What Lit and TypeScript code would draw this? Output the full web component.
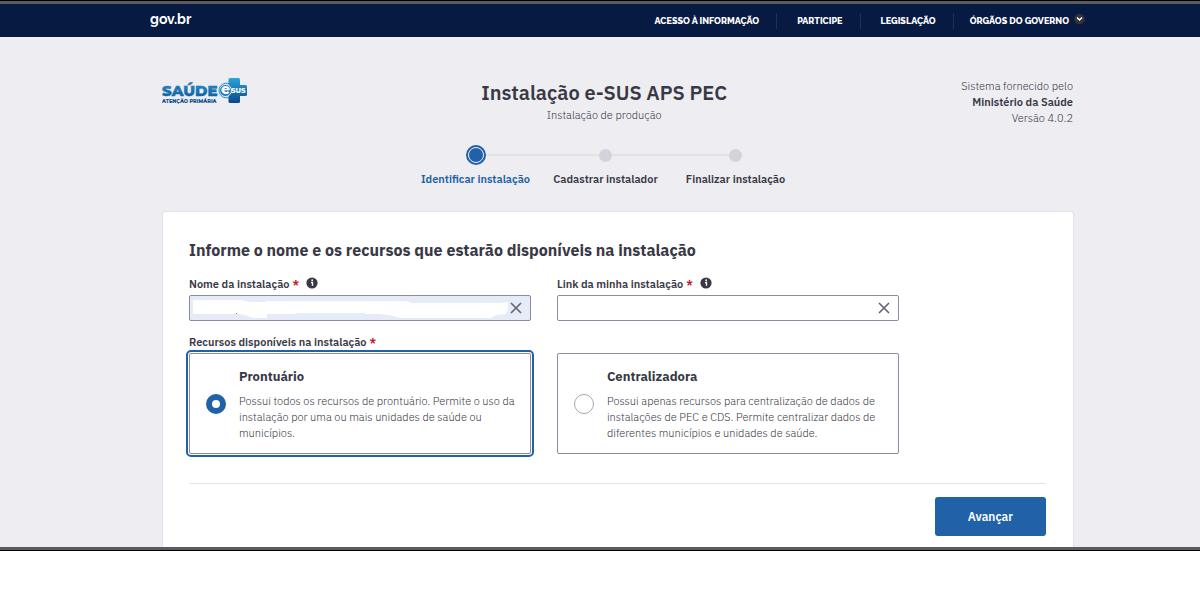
import { LitElement, html, css, nothing } from "lit";
import { customElement, property, state } from "lit/decorators.js";

const sans = css`"IBM Plex Sans", "Noto Sans", "Open Sans", sans-serif`;

@customElement("gov-bar")
class GovBar extends LitElement {
  static styles = css`
    :host {
      display: block;
      background: #071a41;
      color: #fff;
      font-family: Raleway, "Open Sans", sans-serif;
    }
    .bar {
      display: flex;
      justify-content: space-between;
      align-items: center;
      height: 33px;
      padding: 0 115px 0 150px;
    }
    .brand {
      color: inherit;
      text-decoration: none;
      display: block;
    }
    .brand svg {
      display: block;
    }
    .brand text {
      font-family: Raleway, Lato, sans-serif;
      font-weight: 700;
      font-size: 14px;
      fill: #fff;
    }
    .links {
      display: flex;
      align-items: center;
    }
    .link {
      color: inherit;
      text-decoration: none;
      font-size: 9px;
      line-height: 16px;
      font-weight: 800;
      padding: 0 17px 0 20px;
      border-left: 1px solid #1d3056;
      white-space: nowrap;
    }
    .link:first-child {
      border-left: 0;
    }
    .link:last-child {
      display: flex;
      gap: 5px;
      padding-right: 0;
      padding-left: 16px;
    }
    .link svg {
      display: block;
    }
  `;

  render() {
    return html`
      <nav class="bar">
        <a class="brand" href="#" aria-label="gov.br">
          <svg width="48" height="20" viewBox="0 0 48 20"><text x="0" y="13">gov.br</text></svg>
        </a>
        <div class="links">
          <a class="link" href="#">ACESSO À INFORMAÇÃO</a>
          <a class="link" href="#">PARTICIPE</a>
          <a class="link" href="#">LEGISLAÇÃO</a>
          <a class="link" href="#">
            ÓRGÃOS DO GOVERNO
            <svg width="11" height="12" viewBox="0 0 11 12">
              <circle cx="5.5" cy="6" r="5.300" fill="#333" />
              <path d="M3 4.500 5.500 7 8 4.500" fill="none" stroke="#fff" stroke-width="1.500" />
            </svg>
          </a>
        </div>
      </nav>
    `;
  }
}

@customElement("esus-logo")
class EsusLogo extends LitElement {
  static styles = css`
    :host {
      display: block;
    }
    svg {
      display: block;
    }
    text {
      font-family: Montserrat, "Open Sans", sans-serif;
      font-weight: 800;
    }
    .big {
      font-size: 15px;
      stroke: #176fb0;
      stroke-width: 0.5px;
    }
    .small {
      font-size: 5px;
    }
    .e {
      font-size: 14px;
    }
    .sus {
      font-size: 7px;
    }
  `;

  render() {
    return html`
      <svg width="85" height="26" viewBox="0 0 85 26" role="img" aria-label="Saúde Atenção Primária e-SUS">
        <defs>
          <linearGradient id="g" gradientUnits="userSpaceOnUse" x1="0" y1="0" x2="0" y2="26">
            <stop offset="0" stop-color="#2ba3da" />
            <stop offset="0.55" stop-color="#176fb0" />
            <stop offset="1" stop-color="#0b4480" />
          </linearGradient>
        </defs>
        <text fill="url(#g)">
          <tspan class="big" x="0" y="18">SAÚDE</tspan>
          <tspan class="small" x="0" y="25">ATENÇÃO PRIMÁRIA</tspan>
        </text>
        <path d="M68 0h8.500q1.500 0 1.500 1.500V7h5.500q1.500 0 1.500 1.500v8q0 1.500-1.500 1.500H78v5.500q0 1.500-1.500 1.500H68q-1.500 0-1.500-1.500V1.500Q66.500 0 68 0z" fill="url(#g)" />
        <circle cx="63.500" cy="12.500" r="6" fill="#1b7dbd" stroke="#eeedf2" stroke-width="1" />
        <path d="M67 19.300A7.300 7.300 0 1 1 67 5.700" fill="none" stroke="#2486c4" stroke-width="1" />
        <text class="e" x="59" y="16" fill="#fff">e</text>
        <text class="sus" x="69" y="15" fill="#fff">SUS</text>
      </svg>
    `;
  }
}

@customElement("step-list")
class StepList extends LitElement {
  @property({ type: Array }) steps: string[] = [];
  @property({ type: Number }) current = 0;

  static styles = css`
    :host {
      display: block;
      font-family: ${sans};
    }
    .steps {
      display: flex;
      justify-content: center;
      list-style: none;
      margin: 0;
      padding: 0;
    }
    .step {
      display: grid;
      justify-items: center;
      row-gap: 6px;
      width: 130px;
      font-size: 11px;
      line-height: 16px;
      font-weight: 600;
      color: #393946;
      white-space: nowrap;
    }
    .rail {
      display: grid;
      grid-template-columns: 1fr auto 1fr;
      align-items: center;
      width: 100%;
      height: 20px;
    }
    .line {
      height: 2px;
      background: #e1e1e6;
    }
    .step:first-child .line:first-child,
    .step:last-child .line:last-child {
      background: none;
    }
    .dot {
      width: 13px;
      height: 13px;
      border-radius: 50%;
      background: #d3d3db;
    }
    .current {
      color: #2161a7;
    }
    .current .dot {
      width: 14px;
      height: 14px;
      background: #2161a7;
      border: 1px solid #eeedf2;
      box-shadow: 0 0 0 2px #2161a7;
      margin: 0 2px;
    }
  `;

  render() {
    return html`
      <ol class="steps">
        ${this.steps.map(
          (s, i) => html`
            <li class="step ${i === this.current ? "current" : ""}">
              <span class="rail"><span class="line"></span><span class="dot"></span><span class="line"></span></span>
              <span>${s}</span>
            </li>
          `
        )}
      </ol>
    `;
  }
}

@customElement("text-field")
class TextField extends LitElement {
  @property() label = "";
  @property({ type: Boolean }) masked = false;

  static styles = css`
    :host {
      display: block;
      font-family: ${sans};
    }
    .top {
      display: flex;
      align-items: center;
      font-size: 11px;
      line-height: 16px;
      font-weight: 600;
      color: #393946;
      margin-bottom: 3px;
    }
    .req {
      color: #c01c2b;
      font-weight: 700;
      margin: 0 7px 0 3px;
    }
    .box {
      display: flex;
      align-items: center;
      position: relative;
      box-sizing: border-box;
      height: 26px;
      border: 1px solid #8d8c9e;
      border-radius: 2px;
      background: #fff;
    }
    .filled {
      background: #e5ebf7;
    }
    .input {
      flex: 1;
      min-width: 0;
      border: 0;
      outline: 0;
      background: none;
      padding: 0 8px;
      font: inherit;
      font-size: 11px;
    }
    .clear {
      border: 0;
      background: none;
      padding: 0;
      margin-right: 8px;
      display: block;
    }
    svg {
      display: block;
    }
    .mask {
      position: absolute;
      left: 3px;
      top: 3px;
    }
  `;

  render() {
    return html`
      <div class="top">
        <label for="field">${this.label}</label><span class="req">*</span>
        <svg width="12" height="14" viewBox="0 0 12 14">
          <circle cx="6" cy="6" r="5.600" fill="#393946" />
          <path d="M5 5.500h1.500v3.200" fill="none" stroke="#fff" stroke-width="1.300" />
          <circle cx="6.200" cy="3.200" r="0.900" fill="#fff" />
        </svg>
      </div>
      <div class="box ${this.masked ? "filled" : ""}">
        <input class="input" id="field" type="text" />
        ${this.masked
          ? html`<svg class="mask" width="316" height="20" viewBox="0 0 316 20">
              <path
                d="M0 1H49L58 3H72L74 2H214L219 4H307L315 3V9L313 15L303 16L298 19H207L196 16L185 15H172V14H103V15H74V19H60L52 16L46 15H0Z"
                fill="#fff"
              />
              <rect x="43" y="14" width="1" height="1" fill="#777" />
            </svg>`
          : nothing}
        <button class="clear" type="button" aria-label="Limpar">
          <svg width="12" height="12" viewBox="0 0 12 12">
            <path d="M1 1 11 11M11 1 1 11" fill="none" stroke="#636272" stroke-width="1.600" />
          </svg>
        </button>
      </div>
    `;
  }
}

@customElement("app-root")
class AppRoot extends LitElement {
  @state() private choice = "Prontuário";

  private options = [
    {
      name: "Prontuário",
      text: "Possui todos os recursos de prontuário. Permite o uso da instalação por uma ou mais unidades de saúde ou municípios.",
    },
    {
      name: "Centralizadora",
      text: "Possui apenas recursos para centralização de dados de instalações de PEC e CDS. Permite centralizar dados de diferentes municípios e unidades de saúde.",
    },
  ];

  static styles = css`
    :host {
      display: block;
      background: #fff;
      color: #393946;
      font-family: ${sans};
      font-size: 11px;
      line-height: 16px;
    }
    .window {
      background: #eeedf2;
      border-top: 1px solid #000;
      border-bottom: 1px solid #000;
    }
    .edge {
      height: 3px;
      background: #5c5a61;
    }
    .page {
      padding: 41px 126px 0 162px;
    }
    .header {
      display: flex;
      justify-content: space-between;
      align-items: flex-start;
      padding-right: 1px;
    }
    .titles {
      text-align: center;
    }
    .title {
      margin: 0;
      font-size: 20px;
      line-height: 29px;
      font-weight: 600;
    }
    .sub,
    .provider {
      color: #393946;
      font-weight: 300;
    }
    .provider {
      text-align: right;
    }
    .provider strong {
      display: block;
      font-weight: 600;
    }
    .steps {
      margin: 19px 25px 24px 0;
    }
    .card {
      background: #fff;
      border: 1px solid #e1e1e7;
      border-bottom: 0;
      border-radius: 4px 4px 0 0;
      padding: 27px 27px 11px 26px;
    }
    .heading {
      margin: 0 0 15px;
      font-size: 16px;
      line-height: 22px;
      font-weight: 700;
    }
    .grid {
      display: grid;
      grid-template-columns: repeat(12, 1fr);
      column-gap: 26px;
    }
    .cell {
      grid-column: span 5;
    }
    .group {
      border: 0;
      margin: 0;
      padding: 0;
      min-width: 0;
    }
    .legend {
      padding: 13px 0 3px;
      font-weight: 600;
    }
    .req {
      color: #c01c2b;
      font-weight: 700;
      margin-left: 3px;
    }
    .option {
      display: flex;
      align-items: center;
      gap: 13px;
      box-sizing: border-box;
      padding: 12px 10px 12px 16px;
      border: 1px solid #8d8c9e;
      border-radius: 2px;
      grid-column: span 5;
    }
    .chosen {
      outline: 2px solid #2161a7;
      outline-offset: 1px;
    }
    .radio {
      appearance: none;
      flex: none;
      box-sizing: border-box;
      width: 20px;
      height: 20px;
      margin: 0;
      border: 1px solid #a5a4b3;
      border-radius: 50%;
      background: #fff;
    }
    .radio:checked {
      border: 6px solid #2161a7;
    }
    .info {
      padding-top: 3px;
    }
    .name {
      display: block;
      font-size: 13px;
      font-weight: 700;
      margin-bottom: 8px;
    }
    .text {
      display: block;
      font-weight: 300;
    }
    .actions {
      display: flex;
      justify-content: flex-end;
      margin-top: 29px;
      padding-top: 13px;
      border-top: 1px solid #e6e6ea;
    }
    .next {
      border: 0;
      border-radius: 3px;
      background: #2161a7;
      color: #fff;
      font: inherit;
      font-size: 12px;
      font-weight: 600;
      line-height: 19px;
      padding: 10px 33px;
    }
  `;

  render() {
    return html`
      <div class="window">
        <div class="edge"></div>
        <gov-bar></gov-bar>
        <main class="page">
          <header class="header">
            <esus-logo></esus-logo>
            <div class="titles">
              <h1 class="title">Instalação e-SUS APS PEC</h1>
              <div class="sub">Instalação de produção</div>
            </div>
            <div class="provider">
              Sistema fornecido pelo
              <strong>Ministério da Saúde</strong>
              Versão 4.0.2
            </div>
          </header>
          <step-list
            class="steps"
            .steps=${["Identificar instalação", "Cadastrar instalador", "Finalizar instalação"]}
          ></step-list>
          <form class="card" @submit=${(e: Event) => e.preventDefault()}>
            <h2 class="heading">Informe o nome e os recursos que estarão disponíveis na instalação</h2>
            <div class="grid">
              <text-field class="cell" label="Nome da instalação" masked></text-field>
              <text-field class="cell" label="Link da minha instalação"></text-field>
            </div>
            <fieldset class="group">
              <legend class="legend">Recursos disponíveis na instalação<span class="req">*</span></legend>
              <div class="grid">
                ${this.options.map(
                  (o) => html`
                    <label class="option ${this.choice === o.name ? "chosen" : ""}">
                      <input
                        class="radio"
                        type="radio"
                        name="recurso"
                        .checked=${this.choice === o.name}
                        @change=${() => (this.choice = o.name)}
                      />
                      <span class="info">
                        <span class="name">${o.name}</span>
                        <span class="text">${o.text}</span>
                      </span>
                    </label>
                  `
                )}
              </div>
            </fieldset>
            <div class="actions"><button class="next" type="submit">Avançar</button></div>
          </form>
        </main>
        <div class="edge"></div>
      </div>
    `;
  }
}
